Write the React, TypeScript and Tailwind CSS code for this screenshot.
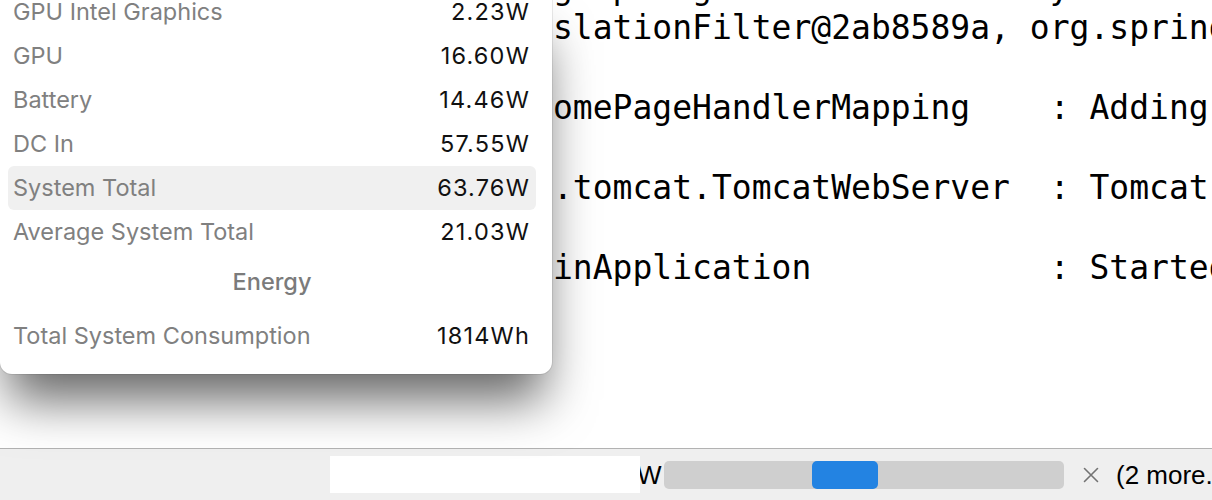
import clsx from "clsx";

type Row = { label: string; value: string; active?: boolean };

const powerRows: Row[] = [
  { label: "GPU Intel Graphics", value: "2.23W" },
  { label: "GPU", value: "16.60W" },
  { label: "Battery", value: "14.46W" },
  { label: "DC In", value: "57.55W" },
  { label: "System Total", value: "63.76W", active: true },
  { label: "Average System Total", value: "21.03W" },
];

// console output, horizontally scrolled so only the tail of each line shows
const logLines = [
  "g.springframework.security.web.context.SecurityContextHolderFilter@",
  "slationFilter@2ab8589a, org.springframework.security.web.csrf",
  "",
  "omePageHandlerMapping    : Adding welcome page: class path resource",
  "",
  ".tomcat.TomcatWebServer  : Tomcat started on port(s): 8080 (http)",
  "",
  "inApplication            : Started MainApplication in 3.412 seconds",
];

const StatRow = ({ label, value, active }: Row) => (
  <div
    className={clsx(
      "mr-4 ml-2 flex h-[44px] items-center justify-between rounded-[6px] pr-[6px] pl-[5px]",
      active && "bg-[#f0f0f0]",
    )}
  >
    <span className="text-[#808080]">{label}</span>
    <span className="tracking-[1.2px] text-[#111]">{value}</span>
  </div>
);

const App = () => {
  return (
    <div className="relative h-[500px] w-[1212px] overflow-hidden bg-white">
      <div className="flex h-full flex-col">
        <div className="h-[448px] overflow-hidden bg-white pl-[553px] font-['DejaVu_Sans_Mono',monospace] text-[33px] leading-[40px] text-black">
          <div className="-mt-[32px] whitespace-pre">
            {logLines.map((line, i) => (
              <div key={i} className="h-[40px]">
                {line}
              </div>
            ))}
          </div>
        </div>
        <div className="flex h-[52px] items-center overflow-hidden border-t border-[#b2b2b2] bg-[#efefef] font-['Liberation_Sans_Narrow','Liberation_Sans',Arial,sans-serif] text-[26px] text-black">
          <div className="relative z-[1] ml-[330px] h-[37px] w-[310px] shrink-0 bg-white" />
          <span className="ml-[-3px] w-[24px] shrink-0 leading-none">W</span>
          <div className="relative ml-[3px] h-[28px] w-[400px] shrink-0 rounded-[5px] bg-[#cfcfcf]">
            <div className="absolute top-0 left-[148px] h-[28px] w-[66px] rounded-[5px] bg-[#2383e2]" />
          </div>
          <svg
            className="ml-[19px] shrink-0"
            width="16"
            height="16"
            viewBox="0 0 16 16"
            fill="none"
            stroke="#737373"
            strokeWidth="1.6"
            strokeLinecap="round"
          >
            <path d="M1.5 1.5 14.5 14.5M14.5 1.5 1.5 14.5" />
          </svg>
          <span className="ml-[17px] shrink-0 whitespace-nowrap leading-none">
            (2 more...)
          </span>
        </div>
      </div>

      <div className="absolute top-0 left-0 z-10 w-[552px] rounded-b-[12px] bg-white font-['Inter',sans-serif] text-[23.5px] shadow-[0_34px_50px_-8px_rgba(0,0,0,0.6),0_0_0_1px_rgba(0,0,0,0.08)]">
        <div className="-mt-[10px] flex flex-col">
          {powerRows.map((row) => (
            <StatRow key={row.label} {...row} />
          ))}
          <div className="flex h-[56px] items-center justify-center pr-[8px] font-medium text-[#7b7b7b]">
            Energy
          </div>
          <div className="mt-[4px] mb-[16px]">
            <StatRow label="Total System Consumption" value="1814Wh" />
          </div>
        </div>
      </div>
    </div>
  );
};

export default App;
